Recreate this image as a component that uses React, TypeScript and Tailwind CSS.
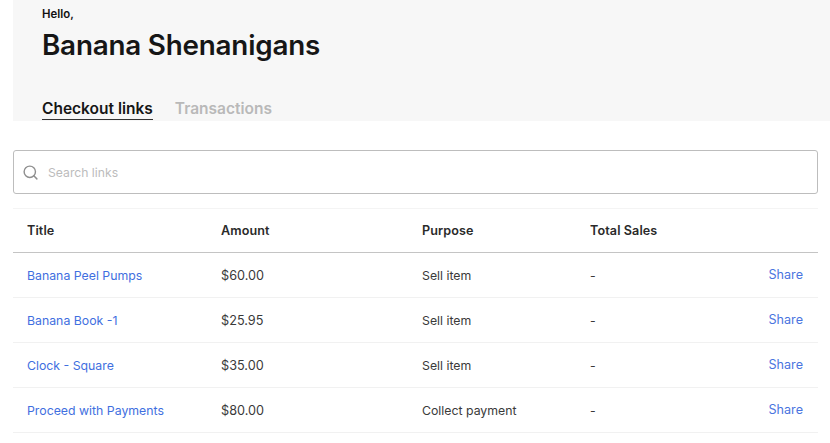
import { Search } from "lucide-react";

const rows = [
  { title: "Banana Peel Pumps", amount: "$60.00", purpose: "Sell item" },
  { title: "Banana Book -1", amount: "$25.95", purpose: "Sell item" },
  { title: "Clock - Square", amount: "$35.00", purpose: "Sell item" },
  { title: "Proceed with Payments", amount: "$80.00", purpose: "Collect payment" },
];

const gridCols = "grid grid-cols-[194px_201px_168px_1fr_auto] items-center pl-[14px] pr-[15px] pt-[2px]";

export default function App() {
  return (
    <div className="h-[443px] w-[830px] overflow-hidden bg-white pl-[13px] font-['Inter',sans-serif] text-[#222]">
      <header className="h-[121px] overflow-hidden bg-[#f7f7f7] pl-[29px] pt-[7px]">
        <p className="text-[11.4px] leading-[15px] font-semibold text-[#111]">Hello,</p>
        <h1 className="mt-[5px] text-[27.8px] leading-[37px] font-semibold tracking-[-0.2px] text-[#161616]">
          Banana Shenanigans
        </h1>
        <nav className="mt-[33px] flex gap-[22px] text-[15.5px] font-semibold">
          <span className="h-[23px] border-b-[1.5px] border-[#333] leading-[24px] text-[#161616]">
            Checkout links
          </span>
          <span className="leading-[24px] text-[#b9b9b9]">Transactions</span>
        </nav>
      </header>

      <div className="mr-[12px] mt-[29px]">
        <div className="flex h-[44px] items-center gap-[9px] rounded-[3px] border border-[#bdbdbd] pl-[8px]">
          <Search className="h-[17px] w-[17px] text-[#8f8f8f]" strokeWidth={2} />
          <span className="pt-[2px] text-[12.2px] text-[#bcbcbc]">Search links</span>
        </div>

        <div className="mt-[14px] border-t border-[#f4f4f4]">
          <div
            className={`${gridCols} h-[44px] border-b border-[#c4c4c4] text-[12.6px] font-semibold tracking-[0.1px] text-[#2a2a2a]`}
          >
            <span>Title</span>
            <span>Amount</span>
            <span>Purpose</span>
            <span>Total Sales</span>
            <span />
          </div>
          {rows.map((row) => (
            <div
              key={row.title}
              className={`${gridCols} h-[45px] border-b border-[#f1f1f1] text-[12.3px] text-[#3a3a3a]`}
            >
              <a className="text-[#3f6fe0]">{row.title}</a>
              <span className="-mt-[1px] text-[12.7px]">{row.amount}</span>
              <span>{row.purpose}</span>
              <span>-</span>
              <a className="-mt-[2px] text-[12.6px] text-[#4a75e0]">Share</a>
            </div>
          ))}
        </div>
      </div>
    </div>
  );
}
